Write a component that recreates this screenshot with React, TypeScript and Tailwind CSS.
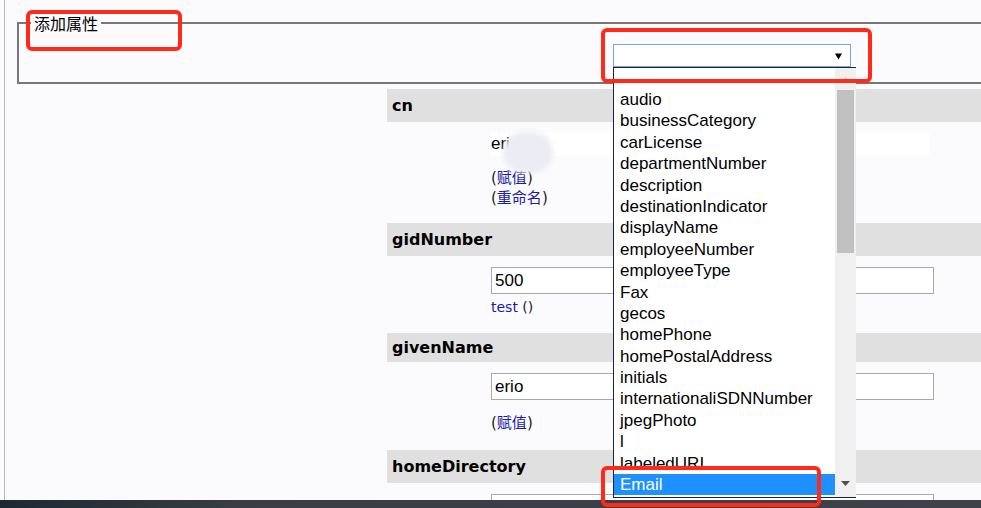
import React from 'react';

const options = [
  '',
  'audio',
  'businessCategory',
  'carLicense',
  'departmentNumber',
  'description',
  'destinationIndicator',
  'displayName',
  'employeeNumber',
  'employeeType',
  'Fax',
  'gecos',
  'homePhone',
  'homePostalAddress',
  'initials',
  'internationaliSDNNumber',
  'jpegPhoto',
  'l',
  'labeledURI',
  'Email',
];

const AttrHeader = ({ name, h }: { name: string; h: string }) => (
  <div className={`${h} flex items-center bg-[#e0e0e0] pl-[5px] font-['DejaVu_Sans'] text-[16px] font-bold text-black`}>
    {name}
  </div>
);

const TextInput = ({ value }: { value: string }) => (
  <div className="ml-[104px] flex h-[27px] w-[443px] items-center border border-[#a9a9a9] bg-white pl-[3px] font-['Liberation_Sans'] text-[17px] text-black">
    {value}
  </div>
);

const LinkLine = ({ label }: { label: string }) => (
  <div className="ml-[104px] h-[20px] font-['DejaVu_Sans','Noto_Sans_CJK_SC',sans-serif] text-[15px] leading-[20px] text-[#222]">
    (<span className="text-[#1a1aa6]">{label}</span>)
  </div>
);

const RedMark = ({ className }: { className: string }) => (
  <div className={`pointer-events-none absolute rounded-[6px] border-[4px] border-[#ff2a1a] ${className}`} />
);

export default function App() {
  return (
    <div className="relative h-[508px] w-[981px] overflow-hidden bg-[#fbfbfe] font-['Liberation_Sans',sans-serif]">
      <div className="flex h-[500px]">
        <div className="w-[4px]" />
        <div className="w-px bg-[#b3b3dc]" />
        <div className="min-w-0 flex-1 overflow-hidden">
          {/* fieldset */}
          <fieldset className="mt-[14px] ml-[12px] w-[1100px] border-2 border-[#777] pb-[15px]">
            <legend className="ml-[12px] px-[3px] font-['Noto_Sans_CJK_SC',sans-serif] text-[16px] leading-[18px] text-black">
              添加属性
            </legend>
            <div className="mt-[12px] ml-[594px] relative h-[23px] w-[238px] border border-[#7ea4d8] bg-white">
              <svg className="absolute left-[221px] top-[8px]" width="7" height="7" viewBox="0 0 7 7">
                <path d="M0 0.5 L7 0.5 L3.5 6.5 Z" fill="#000" />
              </svg>
            </div>
          </fieldset>

          {/* attribute table */}
          <div className="mt-[5px] ml-[382px]">
            <AttrHeader name="cn" h="h-[33px]" />
            <div className="h-[101px] pt-[10px]">
              <div className="relative ml-[104px] flex h-[24px] w-[438px] items-center bg-white font-['Liberation_Sans'] text-[17px] text-black">
                eri
                <div className="absolute left-[12px] top-0 h-[41px] w-[50px] rounded-full bg-[#ececf4] blur-[2px]" />
              </div>
              <div className="mt-[12px]">
                <LinkLine label="赋值" />
                <LinkLine label="重命名" />
              </div>
            </div>

            <AttrHeader name="gidNumber" h="h-[33px]" />
            <div className="h-[77px] pt-[11px]">
              <TextInput value="500" />
              <div className="mt-[3px] ml-[104px] h-[20px] font-['DejaVu_Sans',sans-serif] text-[14px] leading-[20px] text-[#222]">
                <span className="text-[#1a1aa6]">test</span> ()
              </div>
            </div>

            <AttrHeader name="givenName" h="h-[29px]" />
            <div className="h-[88px] pt-[11px]">
              <TextInput value="erio" />
              <div className="mt-[13px]">
                <LinkLine label="赋值" />
              </div>
            </div>

            <AttrHeader name="homeDirectory" h="h-[33px]" />
            <div className="pt-[11px]">
              <TextInput value="" />
            </div>
          </div>
        </div>
      </div>

      {/* taskbar strip */}
      <div className="h-[8px] bg-linear-to-r from-[#1b2a30] via-[#3a3d44] via-25% to-[#3f4249]" />

      {/* open select list */}
      <div className="absolute left-[613px] top-[67px] flex h-[431px] w-[243px] border-t border-b border-l border-[#1d2440] bg-white">
        <div className="min-w-0 flex-1 overflow-hidden">
          {options.map((opt, i) => (
            <div
              key={i}
              className={`${i === 0 ? 'h-[21px]' : 'h-[21.4px]'} pl-[6px] text-[17px] leading-[21.4px] whitespace-nowrap ${
                opt === 'Email' ? 'bg-[#1e90ff] text-white' : 'text-black'
              }`}
            >
              {opt}
            </div>
          ))}
        </div>
        <div className="relative flex w-[21px] flex-col bg-[#f0f0f0]">
          <div className="flex h-[22px] items-center justify-center">
            <svg width="7" height="4" viewBox="0 0 7 4">
              <path d="M0 4 L7 4 L3.5 0 Z" fill="#c8c8c8" />
            </svg>
          </div>
          <div className="mx-[2px] h-[163px] bg-[#c1c1c1]" />
          <div className="flex-1" />
          <div className="flex h-[24px] items-center justify-center pb-[3px]">
            <svg width="9" height="5" viewBox="0 0 9 5">
              <path d="M0 0 L9 0 L4.5 5 Z" fill="#505050" />
            </svg>
          </div>
        </div>
      </div>

      {/* annotation boxes */}
      <RedMark className="left-[26px] top-[10px] h-[41px] w-[156px]" />
      <RedMark className="left-[601px] top-[28px] h-[55px] w-[271px]" />
      <RedMark className="left-[601px] top-[466px] h-[41px] w-[220px]" />
    </div>
  );
}
